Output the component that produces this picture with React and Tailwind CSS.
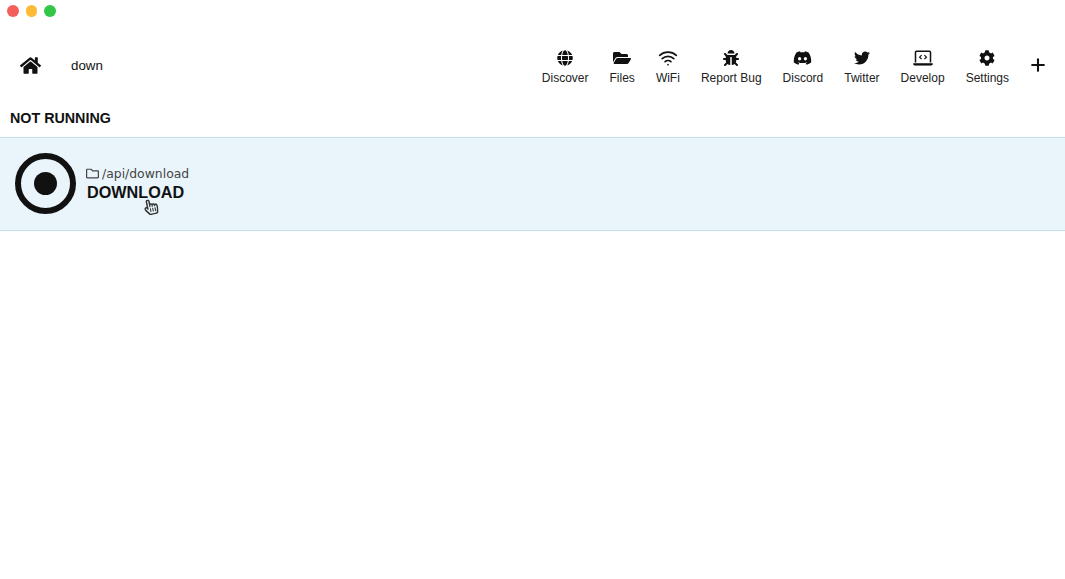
import React from "react";
import { FaGlobe, FaFolderOpen, FaBug, FaDiscord, FaTwitter, FaCog, FaHome, FaRegFolder, FaRegHandPointer } from "react-icons/fa";
import { Wifi, Plus } from "lucide-react";

const LaptopCode = ({ className }) => (
  <svg className={className} viewBox="0 0 20 16" fill="none" stroke="currentColor">
    <path d="M2.5 12.5V2.2c0-.6.4-1 1-1h13c.6 0 1 .4 1 1v10.3" strokeWidth="1.5" />
    <path d="M0.5 13.6h19v.4c0 .8-.6 1.2-1.2 1.2H1.7c-.6 0-1.2-.4-1.2-1.2z" fill="currentColor" strokeWidth="0.6" />
    <path d="M8.6 5.2 6.6 7.2l2 2M11.4 5.2l2 2-2 2" strokeWidth="1.2" />
  </svg>
);

const navItems = [
  { label: "Discover", icon: FaGlobe, size: "w-[16px] h-[16px]" },
  { label: "Files", icon: FaFolderOpen, size: "w-[18px] h-[16px]" },
  { label: "WiFi", icon: Wifi, size: "w-[22px] h-[20px] -my-[2px]" },
  { label: "Report Bug", icon: FaBug, size: "w-[16px] h-[16px]" },
  { label: "Discord", icon: FaDiscord, size: "w-[19px] h-[16px]" },
  { label: "Twitter", icon: FaTwitter, size: "w-[16px] h-[16px]" },
  { label: "Develop", icon: LaptopCode, size: "w-[20px] h-[16px]" },
  { label: "Settings", icon: FaCog, size: "w-[16px] h-[16px]" },
];

const App = () => {
  return (
    <div className="h-[579px] w-[1065px] overflow-hidden bg-white font-['Liberation_Sans',sans-serif] text-[#111]">
      <div className="flex h-[22px] items-center gap-[7px] pl-[7px]">
        <span className="h-[11.5px] w-[11.5px] rounded-full bg-[#f45f5b]" />
        <span className="h-[11.5px] w-[11.5px] rounded-full bg-[#fdbb35]" />
        <span className="h-[11.5px] w-[11.5px] rounded-full bg-[#33c748]" />
      </div>

      <div className="flex h-[73px] items-start justify-between">
        <div className="flex items-center pt-[33px]">
          <FaHome className="ml-[20px] text-[21px]" />
          <span className="ml-[30px] text-[13.3px]">down</span>
        </div>
        <div className="flex items-start pr-[17px] pt-[28px]">
          {navItems.map(({ label, icon: Icon, size }) => (
            <div key={label} className="ml-[21px] flex flex-col items-center">
              <Icon className={size} />
              <span className="mt-[4px] text-[12px] leading-[16px] text-[#222]">{label}</span>
            </div>
          ))}
          <Plus className="ml-[19px] mt-[5px] h-[20px] w-[20px]" strokeWidth={2.5} />
        </div>
      </div>

      <div className="flex h-[42px] items-start px-[10px] pt-[15px] text-[14.3px] font-bold leading-[17px]">NOT RUNNING</div>

      <div className="flex h-[94px] items-center border-y border-[#c5e2f3] bg-[#e9f5fb] pb-[1px] pl-[15px]">
        <div className="flex h-[61px] w-[61px] items-center justify-center rounded-full border-[6.5px] border-[#111]">
          <div className="h-[23px] w-[23px] rounded-full bg-[#111]" />
        </div>
        <div className="relative ml-[10px] flex flex-col pl-[1px]">
          <div className="-ml-[1px] flex items-center leading-[16px] text-[#444] font-['DejaVu_Sans',sans-serif]">
            <FaRegFolder className="mr-[3px] h-[13px] w-[13px]" />
            <span className="text-[12.4px]">/api/download</span>
          </div>
          <div className="text-[16.2px] font-bold leading-[20px]">DOWNLOAD</div>
          <FaRegHandPointer className="absolute left-[58px] top-[33px] h-[16px] w-[14px] rotate-[-12deg] text-[#333]" />
        </div>
      </div>
    </div>
  );
};

export default App;
